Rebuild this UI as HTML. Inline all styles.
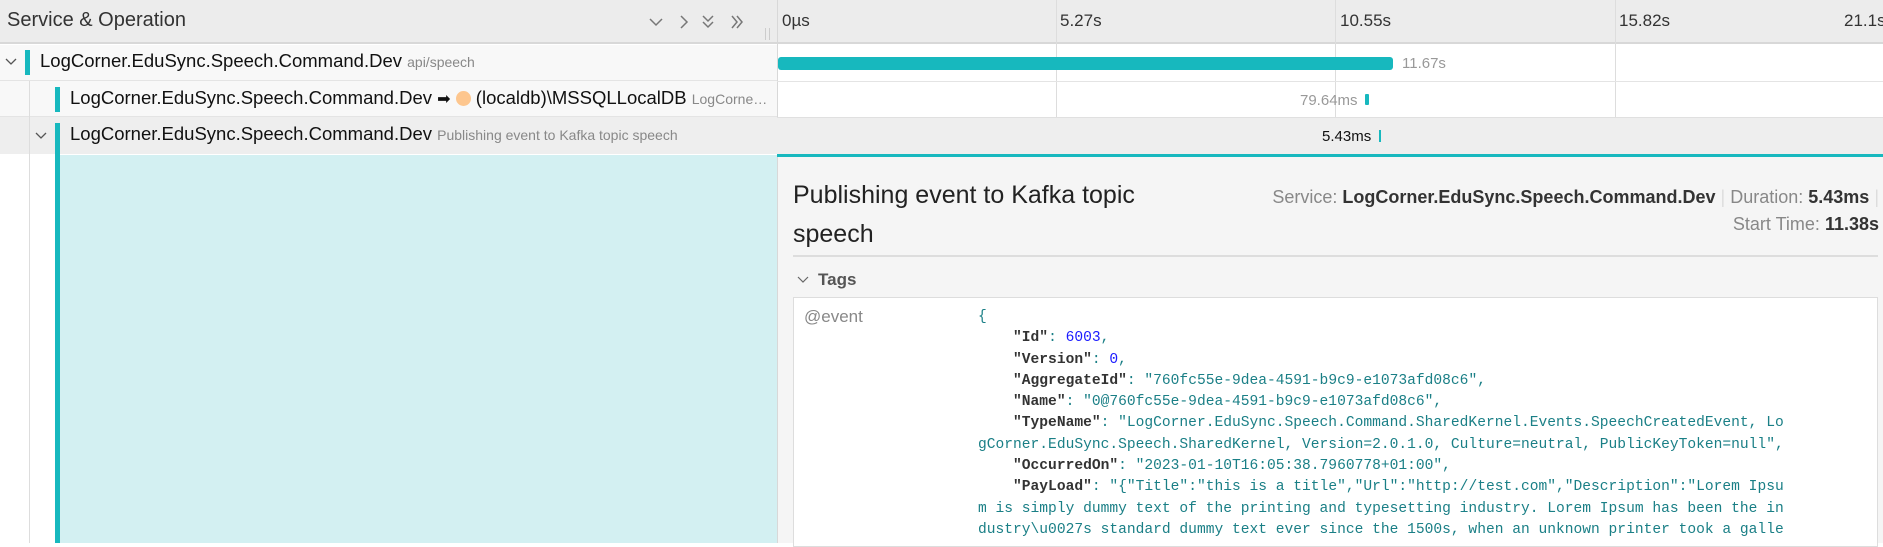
<!DOCTYPE html>
<html><head><meta charset="utf-8"><style>
*{margin:0;padding:0;box-sizing:border-box}
body{width:1883px;height:543px;overflow:hidden;background:#fff;font-family:"Liberation Sans",Arial,sans-serif;position:relative;color:#111}
.a{position:absolute;white-space:nowrap}
.mono{font-family:"Liberation Mono",monospace;font-size:14.6px;white-space:pre;color:#1a7f86;line-height:21.3px}
.k{color:#333;font-weight:bold}
.n{color:#1a1aff}
</style></head><body>
<!-- header -->
<div class="a" style="left:0;top:0;width:1883px;height:44px;background:#ececec;border-bottom:2px solid #d8d8d8"></div>
<div class="a" style="left:7px;top:9px;font-size:20px;color:#333">Service &amp; Operation</div>
<svg class="a" style="left:645px;top:12px" width="110" height="20" viewBox="0 0 110 20" fill="none" stroke="#777" stroke-width="1.5">
<path d="M5 7l6 6 6-6"/><path d="M36 4l6 6-6 6"/><path d="M58 4l5 5 5-5M58 10l5 5 5-5"/><path d="M87 4l5 6-5 6M92 4l5 6-5 6"/></svg>
<div class="a" style="left:765px;top:28px;width:1px;height:12px;background:#ccc"></div>
<div class="a" style="left:769px;top:28px;width:1px;height:12px;background:#ccc"></div>
<div class="a" style="left:777px;top:0;width:1px;height:543px;background:#d8d8d8"></div>
<div class="a" style="left:782px;top:11px;font-size:17px;color:#333">0µs</div>
<div class="a" style="left:1060px;top:11px;font-size:17px;color:#333">5.27s</div>
<div class="a" style="left:1340px;top:11px;font-size:17px;color:#333">10.55s</div>
<div class="a" style="left:1619px;top:11px;font-size:17px;color:#333">15.82s</div>
<div class="a" style="left:1844px;top:11px;font-size:17px;color:#333">21.1s</div>
<div class="a" style="left:1056px;top:0;width:1px;height:154px;background:#ddd"></div>
<div class="a" style="left:1335px;top:0;width:1px;height:154px;background:#ddd"></div>
<div class="a" style="left:1615px;top:0;width:1px;height:154px;background:#ddd"></div>
<!-- rows -->
<div class="a" style="left:0;top:45px;width:777px;height:36px;background:#f8f8f8;border-bottom:1px solid #e4e4e4"></div>
<div class="a" style="left:0;top:81px;width:777px;height:36px;background:#f8f8f8;border-bottom:1px solid #e4e4e4"></div>
<div class="a" style="left:0;top:117px;width:1883px;height:37px;background:#eee"></div>
<div class="a" style="left:777px;top:81px;width:1106px;height:1px;background:#e4e4e4"></div>
<div class="a" style="left:777px;top:117px;width:1106px;height:1px;background:#e0e0e0"></div>
<div class="a" style="left:29px;top:81px;width:1px;height:462px;background:#ddd"></div>
<svg class="a" style="left:5px;top:57px" width="12" height="10"><path d="M1 2l5 5 5-5" fill="none" stroke="#555" stroke-width="1.3"/></svg>
<div class="a" style="left:25px;top:50px;width:5px;height:25px;background:#17b8be"></div>
<div class="a" style="left:40px;top:50px;font-size:18.5px">LogCorner.EduSync.Speech.Command.Dev <span style="font-size:14px;color:#888">api/speech</span></div>
<div class="a" style="left:55px;top:87px;width:5px;height:25px;background:#17b8be"></div>
<div class="a" style="left:70px;top:87px;font-size:18.5px;width:703px;overflow:hidden;text-overflow:ellipsis">LogCorner.EduSync.Speech.Command.Dev <span style="font-size:16px">➡</span> <span style="display:inline-block;width:15px;height:15px;border-radius:50%;background:#fdc68e;vertical-align:-2px"></span> (localdb)\MSSQLLocalDB <span style="font-size:14px;color:#888">LogCorne…</span></div>
<svg class="a" style="left:35px;top:131px" width="12" height="10"><path d="M1 2l5 5 5-5" fill="none" stroke="#555" stroke-width="1.3"/></svg>
<div class="a" style="left:55px;top:123px;width:5px;height:420px;background:#17b8be"></div>
<div class="a" style="left:70px;top:123px;font-size:18.5px">LogCorner.EduSync.Speech.Command.Dev <span style="font-size:14px;color:#888">Publishing event to Kafka topic speech</span></div>
<div class="a" style="left:60px;top:155px;width:717px;height:388px;background:#d3f0f2"></div>
<!-- bars -->
<div class="a" style="left:778px;top:57px;width:615px;height:13px;background:#17b8be;border-radius:3px"></div>
<div class="a" style="left:1402px;top:55px;font-size:15px;color:#999">11.67s</div>
<div class="a" style="left:1365px;top:94px;width:4px;height:11px;background:#17b8be;border-radius:1px"></div>
<div class="a" style="left:1300px;top:92px;font-size:15px;color:#999">79.64ms</div>
<div class="a" style="left:1379px;top:130px;width:2px;height:12px;background:#17b8be"></div>
<div class="a" style="left:1322px;top:128px;font-size:15px;color:#111">5.43ms</div>
<div class="a" style="left:777px;top:154px;width:1106px;height:3px;background:#17b8be"></div>
<!-- detail -->
<div class="a" style="left:778px;top:157px;width:1105px;height:386px;background:#f5f5f5"></div>
<div class="a" style="left:793px;top:176px;font-size:25px;line-height:39px;color:#222;white-space:normal;width:380px">Publishing event to Kafka topic speech</div>
<div class="a" style="right:4px;top:187px;font-size:18px;color:#888">Service: <b style="color:#333">LogCorner.EduSync.Speech.Command.Dev</b> <span style="color:#ddd">|</span> Duration: <b style="color:#333">5.43ms</b> <span style="color:#ddd">|</span></div>
<div class="a" style="right:4px;top:214px;font-size:18px;color:#888">Start Time: <b style="color:#333">11.38s</b></div>
<div class="a" style="left:793px;top:255px;width:1085px;height:2px;background:#ddd"></div>
<svg class="a" style="left:797px;top:275px" width="12" height="10"><path d="M1 2l5 5 5-5" fill="none" stroke="#666" stroke-width="1.2"/></svg>
<div class="a" style="left:818px;top:270px;font-size:17px;font-weight:bold;color:#555">Tags</div>
<div class="a" style="left:793px;top:297px;width:1085px;height:250px;background:#fff;border:1px solid #ddd"></div>
<div class="a" style="left:804px;top:307px;font-size:17px;color:#888">@event</div>
<div class="a mono" style="left:978px;top:307px">{
    <span class="k">"Id"</span>: <span class="n">6003</span>,
    <span class="k">"Version"</span>: <span class="n">0</span>,
    <span class="k">"AggregateId"</span>: "760fc55e-9dea-4591-b9c9-e1073afd08c6",
    <span class="k">"Name"</span>: "0@760fc55e-9dea-4591-b9c9-e1073afd08c6",
    <span class="k">"TypeName"</span>: "LogCorner.EduSync.Speech.Command.SharedKernel.Events.SpeechCreatedEvent, Lo
gCorner.EduSync.Speech.SharedKernel, Version=2.0.1.0, Culture=neutral, PublicKeyToken=null",
    <span class="k">"OccurredOn"</span>: "2023-01-10T16:05:38.7960778+01:00",
    <span class="k">"PayLoad"</span>: "{"Title":"this is a title","Url":"http://test.com","Description":"Lorem Ipsu
m is simply dummy text of the printing and typesetting industry. Lorem Ipsum has been the in
dustry\u0027s standard dummy text ever since the 1500s, when an unknown printer took a galle</div>
</body></html>
